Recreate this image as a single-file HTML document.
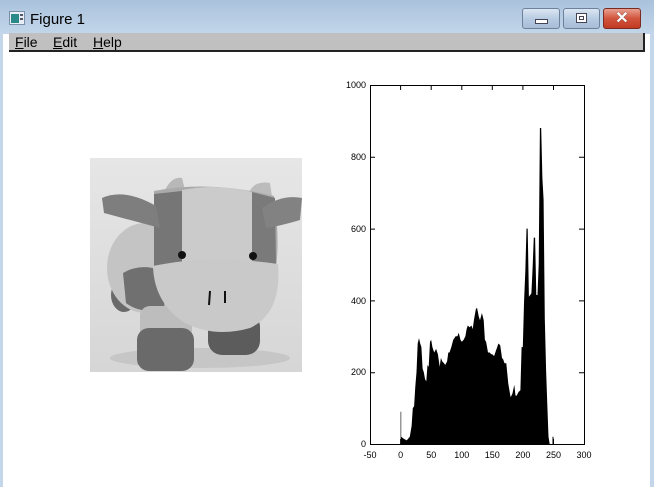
<!DOCTYPE html>
<html><head><style>
*{margin:0;padding:0;box-sizing:border-box}
body{width:654px;height:487px;overflow:hidden;background:#fff;font-family:"Liberation Sans",sans-serif;position:relative}
#title{position:absolute;left:0;top:0;width:654px;height:34px;background:linear-gradient(#a9c2dc,#c3d6ea)}
#frameL{position:absolute;left:0;top:34px;width:3px;height:453px;background:#c3d6ea}
#frameR{position:absolute;left:650px;top:34px;width:4px;height:453px;background:#c3d6ea}
#ttl{position:absolute;left:30px;top:11px;font-size:15px;color:#000}
.btn{position:absolute;top:8px;height:21px;border:1px solid #6f819a;border-radius:3px;background:linear-gradient(#dbe6f2,#b8cce2 50%,#a7bdd6)}
#menu{position:absolute;left:9px;top:33px;width:636px;height:19px;background:#c0c0c0;border-bottom:2px solid #222;border-right:2px solid #222;font-size:14px}
#menu span{position:absolute;top:1px}
</style></head><body>
<div id="title"></div>
<div id="frameL"></div><div id="frameR"></div>
<svg style="position:absolute;left:9px;top:11px" width="16" height="14"><rect x="0.5" y="0.5" width="15" height="13" fill="#e8eef5" stroke="#7a8fa8"/><rect x="2" y="3" width="8" height="9" fill="#2a8a8a"/><rect x="11" y="3" width="3" height="2" fill="#556"/><rect x="11" y="7" width="3" height="2" fill="#556"/></svg>
<div id="ttl">Figure 1</div>
<div class="btn" style="left:522px;width:38px"><div style="position:absolute;left:12px;top:10px;width:13px;height:5px;background:#fff;border:1px solid #445"></div></div>
<div class="btn" style="left:563px;width:37px"><div style="position:absolute;left:12px;top:4px;width:11px;height:10px;background:#fff;border:1px solid #445"><div style="margin:2px;width:5px;height:4px;border:1px solid #445"></div></div></div>
<div class="btn" style="left:603px;width:38px;background:linear-gradient(#e8a090,#d2543c 50%,#c23a22);border-color:#7a2a20"><div style="position:absolute;left:0;width:36px;top:-1px;text-align:center;color:#fff;font-weight:bold;font-size:16px;text-shadow:0 0 1px #333">✕</div></div>
<div id="menu"><span style="left:6px"><u>F</u>ile</span><span style="left:44px"><u>E</u>dit</span><span style="left:84px"><u>H</u>elp</span></div>

<svg style="position:absolute;left:90px;top:158px" width="212" height="214" viewBox="0 0 212 214">
<defs><linearGradient id="bg" x1="0" y1="0" x2="0" y2="1"><stop offset="0" stop-color="#e6e6e6"/><stop offset="1" stop-color="#d6d6d6"/></linearGradient></defs>
<rect width="212" height="214" fill="url(#bg)"/>
<ellipse cx="110" cy="200" rx="90" ry="10" fill="#c6c6c6"/>
<ellipse cx="34" cy="137" rx="13" ry="17" fill="#6a6a6a"/>
<ellipse cx="55" cy="110" rx="38" ry="45" fill="#c4c4c4"/>
<path d="M33 115 Q50 105 70 112 L75 152 Q50 156 36 145Z" fill="#707070"/>
<rect x="50" y="148" width="52" height="35" rx="10" fill="#bdbdbd"/>
<rect x="47" y="170" width="57" height="43" rx="12" fill="#6a6a6a"/>
<rect x="118" y="155" width="52" height="42" rx="14" fill="#5c5c5c"/>
<path d="M73 37 Q80 18 92 20 L97 40Z" fill="#b8b8b8"/>
<path d="M158 38 Q162 22 180 25 L183 45Z" fill="#bcbcbc"/>
<path d="M64 33 Q120 22 184 38 Q190 80 186 110 L64 110Z" fill="#aaaaaa"/>
<path d="M92 32 Q128 25 162 34 L163 108 L92 108Z" fill="#cbcbcb"/>
<path d="M64 36 L92 33 L92 108 L64 110Z" fill="#767676"/>
<path d="M162 34 L185 40 L186 106 L162 106Z" fill="#7a7a7a"/>
<path d="M12 40 Q35 30 66 48 L70 70 Q40 62 14 55Z" fill="#7e7e7e"/>
<path d="M172 50 Q192 36 212 40 L210 62 Q190 68 176 70Z" fill="#828282"/>
<path d="M63 108 Q120 96 188 106 Q192 155 160 170 Q125 180 95 165 Q64 145 63 108Z" fill="#c9c9c9"/>
<circle cx="92" cy="97" r="4" fill="#111"/>
<circle cx="163" cy="98" r="4" fill="#111"/>
<path d="M120 133 L119 147 M135 133 L135 145" stroke="#111" stroke-width="2"/>
</svg>

<svg style="position:absolute;left:0;top:0" width="654" height="487" font-family="Liberation Sans,sans-serif" font-size="9">
<rect x="370.5" y="85.5" width="214" height="359" fill="none" stroke="#000"/>
<g stroke="#000">
<path d="M400.6 85v5M431.2 85v5M461.8 85v5M492.3 85v5M522.9 85v5M553.5 85v5M400.6 444v-5M431.2 444v-5M461.8 444v-5M492.3 444v-5M522.9 444v-5M553.5 444v-5"/>
<path d="M370 157.3h5M370 229.1h5M370 300.9h5M370 372.7h5M584 157.3h-5M584 229.1h-5M584 300.9h-5M584 372.7h-5"/>
</g>
<polygon fill="#000" points="400.6,444 400.6,411.7 401.2,411.7 401.2,436.8 403.6,438.6 406.7,440.4 409.8,436.8 411.6,426 412.8,408.1 414.1,406.3 415.3,386.6 416.5,372.2 417.7,343.5 419,338.1 420.2,343.5 421.4,347.1 422.6,368.6 423.8,372.2 425.1,379.4 426.3,381.2 427.5,365 428.7,366.8 430,341.7 431.2,339.9 432.4,347.1 434.2,352.5 436.1,348.9 437.9,354.3 439.7,366.8 440.9,357.9 442.2,361.4 444,363.2 445.2,365 447.1,361.4 448.3,352.5 449.5,352.5 451.3,347.1 453.2,339.9 454.4,338.1 455.6,336.3 457.4,336.3 458.7,332.7 460.5,339.9 461.8,341.7 463.6,339.9 465.4,336.3 466.6,329.1 467.8,325.5 469.7,327.3 471.5,325.5 472.7,329.1 473.9,320.2 475.8,309.4 477,307.6 478.8,316.6 480,320.2 481.9,313 483.7,320.2 484.9,339.9 486.1,341.7 488,352.5 489.8,352.5 491.1,354.3 492.3,354.3 494.1,356.1 495.9,350.7 497.2,347.1 498.4,343.5 500.2,345.3 502,357.9 503.3,359.6 504.5,363.2 506.3,363.2 508.2,383 509.4,390.2 510.6,397.3 512.4,393.8 514.3,384.8 515.5,395.6 516.7,395.6 518.5,392 520.4,390.2 521.6,347.1 522.8,347.1 524.1,300.4 525.3,271.7 526.5,228.6 527.7,228.6 528.9,296.8 530.2,295 531.4,293.2 532.6,268.1 533.8,237.6 535.1,237.6 536.3,295 537.5,295 538.7,264.5 539.9,128 541.2,128 542.4,178.3 543.6,199.8 544.8,318.4 546.1,370.4 547.3,404.5 548.5,436.8 549.7,444 552.5,444 552.5,436.8 553.5,436.8 553.5,444"/>
<g text-anchor="end"><text x="366" y="88">1000</text><text x="366" y="160">800</text><text x="366" y="232">600</text><text x="366" y="304">400</text><text x="366" y="375">200</text><text x="366" y="447">0</text></g>
<g text-anchor="middle"><text x="370" y="458">-50</text><text x="400.6" y="458">0</text><text x="431.2" y="458">50</text><text x="461.8" y="458">100</text><text x="492.3" y="458">150</text><text x="522.9" y="458">200</text><text x="553.5" y="458">250</text><text x="584" y="458">300</text></g>
</svg>
</body></html>
